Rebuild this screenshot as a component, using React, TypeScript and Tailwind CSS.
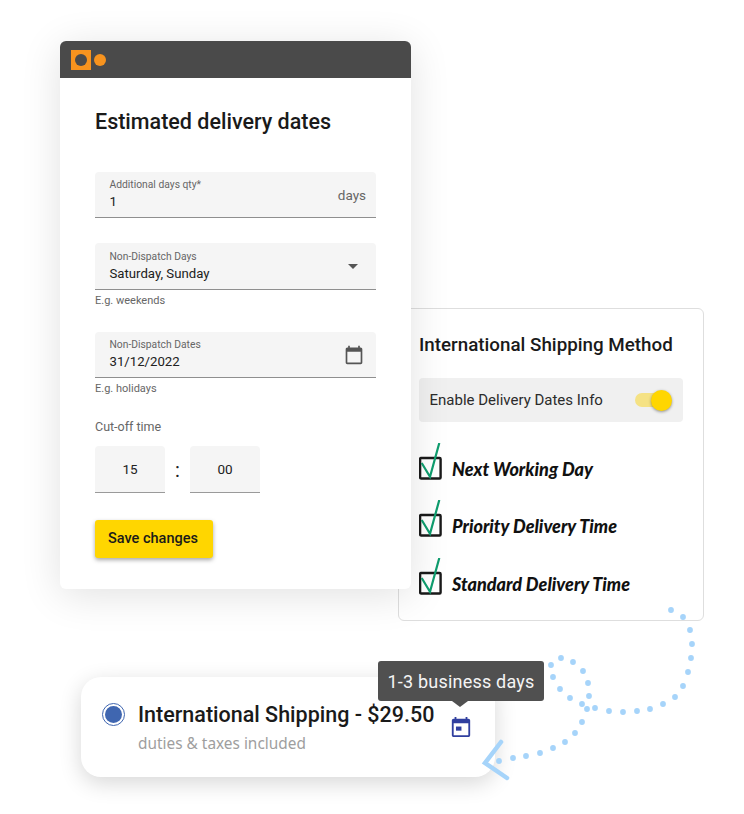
import React from 'react';

const dots = [
  [671, 610], [683, 617], [690, 630], [692, 644], [691, 658], [688, 672], [683, 686], [675, 697], [663, 704], [650, 709],
  [637, 711], [623, 712], [609, 711], [595, 708], [582, 704], [570, 698], [560, 689], [553, 677], [551, 665], [561, 658],
  [573, 662], [583, 671], [588, 683], [589, 696], [587, 709], [582, 722], [575, 733], [565, 742], [553, 748], [540, 753],
  [526, 756], [513, 758], [499, 761],
];

const items = ['Next Working Day', 'Priority Delivery Time', 'Standard Delivery Time'];

function CalendarIcon({ className }: { className: string }) {
  return (
    <svg viewBox="0 0 24 24" className={className} fill="currentColor">
      <path d="M20 3h-1V1h-2v2H7V1H5v2H4c-1.100 0-2 .9-2 2v16c0 1.100.9 2 2 2h16c1.100 0 2-.9 2-2V5c0-1.100-.9-2-2-2zm0 18H4V8h16v13z" />
    </svg>
  );
}

function Field({ label, value, tall, children }: { label: string; value: string; tall?: boolean; children?: React.ReactNode }) {
  return (
    <div className={`flex items-center justify-between rounded-t border-b border-[#8f8f8f] bg-[#f5f5f5] pl-[14.5px] pr-[10px] ${tall ? 'h-[47px]' : 'h-[46px]'}`}>
      <div className="flex flex-col pt-[1px]">
        <span className="text-[10.3px] leading-[14px] text-[#666666]">{label}</span>
        <span className="text-[13.2px] leading-[20px] text-[#212121]">{value}</span>
      </div>
      {children}
    </div>
  );
}

function TimeBox({ value }: { value: string }) {
  return (
    <div className="flex h-[47px] w-[70px] items-center justify-center rounded-t border-b border-[#9a9a9a] bg-[#f5f5f5] text-[13.5px] text-[#212121]">
      {value}
    </div>
  );
}

export default function App() {
  return (
    <div className="relative h-[814px] w-[744px] overflow-hidden bg-white font-['Roboto',sans-serif]">
      {/* shipping method card */}
      <div className="absolute left-[398px] top-[308px] h-[313px] w-[306px] rounded-[6px] border border-[#dedede] bg-white pl-[20px]">
        <h2 className="mt-[23px] text-[18.8px] font-medium leading-[26px] text-[#1a1a1a]">International Shipping Method</h2>
        <div className="mt-[20px] flex h-[44px] w-[264px] items-center justify-between rounded bg-[#f0f0f0] pl-[10.5px] pr-[14px]">
          <span className="text-[15px] text-[#2b2b2b]">Enable Delivery Dates Info</span>
          <div className="relative h-[14px] w-[34px] rounded-full bg-[#f5e284]">
            <div className="absolute right-[-3px] top-[-3.5px] h-[21px] w-[21px] rounded-full bg-[#ffd600] shadow-[0_1px_3px_rgba(0,0,0,0.4)]" />
          </div>
        </div>
        <div className="mt-[21px] flex flex-col gap-[20.4px]">
          {items.map((item) => (
            <div key={item} className="flex h-[37px] items-start gap-[9px]">
              <svg width="24" height="37" viewBox="0 0 24 37" fill="none" className="shrink-0">
                <rect x="1.100" y="15" width="20.500" height="20.500" stroke="#1a1a1a" strokeWidth="2.400" rx="1" />
                <path d="M2.700 20L11 33.700L20.300 0" stroke="#0f9d6e" strokeWidth="2.200" />
              </svg>
              <span className="mt-[14px] text-[18px] font-black italic leading-[24px] text-[#111111] font-['Lato',cursive]">{item}</span>
            </div>
          ))}
        </div>
      </div>

      {/* settings window */}
      <div className="absolute left-[60px] top-[41px] h-[548px] w-[351px] overflow-hidden rounded-[6px] bg-white shadow-[0_6px_40px_rgba(0,0,0,0.12)]">
        <div className="flex h-[37px] items-center gap-[3px] bg-[#4a4a4a] pl-[11px]">
          <div className="flex h-[20px] w-[20px] items-center justify-center bg-[#f7931e]">
            <div className="h-[12px] w-[12px] rounded-full bg-[#4a4a4a]" />
          </div>
          <div className="h-[12px] w-[12px] rounded-full bg-[#f7931e]" />
        </div>
        <div className="px-[35px]">
          <h1 className="mt-[29px] text-[21.5px] font-medium leading-[30px] text-[#1a1a1a]">Estimated delivery dates</h1>
          <div className="mt-[35px]">
            <Field label="Additional days qty*" value="1">
              <span className="mt-[2px] text-[13.5px] text-[#666666]">days</span>
            </Field>
          </div>
          <div className="mt-[25px]">
            <Field label="Non-Dispatch Days" value="Saturday, Sunday" tall>
              <div className="mr-[8px] h-0 w-0 border-x-[5px] border-t-[5px] border-x-transparent border-t-[#555555]" />
            </Field>
            <p className="mt-[3px] text-[11px] leading-[16px] text-[#666666]">E.g. weekends</p>
          </div>
          <div className="mt-[23px]">
            <Field label="Non-Dispatch Dates" value="31/12/2022">
              <CalendarIcon className="mr-[2px] h-[20px] w-[20px] text-[#555555]" />
            </Field>
            <p className="mt-[3px] text-[11px] leading-[16px] text-[#666666]">E.g. holidays</p>
          </div>
          <p className="mt-[21px] text-[12.5px] leading-[18px] text-[#666666]">Cut-off time</p>
          <div className="mt-[10px] flex items-center">
            <TimeBox value="15" />
            <span className="w-[25px] text-center text-[20px] leading-[24px] text-[#212121]">:</span>
            <TimeBox value="00" />
          </div>
          <button className="mt-[27px] h-[38px] w-[118px] rounded-[3px] bg-[#ffd600] pr-[2px] text-[14.5px] font-medium text-[#1a1a1a] shadow-[0_2px_4px_rgba(0,0,0,0.35)]">
            Save changes
          </button>
        </div>
      </div>

      {/* checkout option */}
      <div className="absolute left-[81px] top-[677px] flex h-[100px] w-[414px] items-start rounded-[20px] bg-white pl-[21px] pt-[26px] shadow-[0_6px_22px_rgba(0,0,0,0.16)]">
        <div className="mr-[13px] flex h-[23px] w-[23px] shrink-0 items-center justify-center rounded-full border border-[#3f66b0]">
          <div className="h-[17px] w-[17px] rounded-full bg-[#3f66b0]" />
        </div>
        <div className="pt-[1px]">
          <div className="text-[21.5px] font-medium leading-[22px] text-[#1a1a1a]">International Shipping - $29.50</div>
          <div className="mt-[7px] text-[15.4px] leading-[22px] text-[#9e9e9e] font-['Noto_Sans',sans-serif]">duties &amp; taxes included</div>
        </div>
      </div>
      <svg viewBox="0 0 24 24" className="absolute left-[450px] top-[715.5px] h-[22px] w-[22px] text-[#303f9f]" fill="currentColor">
        <path d="M20 3h-1V1h-2v2H7V1H5v2H4c-1.100 0-2 .9-2 2v16c0 1.100.9 2 2 2h16c1.100 0 2-.9 2-2V5c0-1.100-.9-2-2-2zm0 18H4V8h16v13z" />
        <path d="M6.500 11.500h6V16h-6z" />
      </svg>

      {/* tooltip */}
      <div className="absolute left-[378px] top-[661px] flex h-[40px] w-[166px] items-center justify-center rounded-[3px] bg-[#505050] text-[18px] tracking-[0.2px] text-[#f5f5f5]">
        1-3 business days
        <div className="absolute left-[74px] top-[40px] h-0 w-0 border-x-[8px] border-t-[6px] border-x-transparent border-t-[#505050]" />
      </div>

      {/* dotted arrow */}
      <svg className="pointer-events-none absolute left-0 top-0" width="744" height="814" fill="none">
        {dots.map(([cx, cy], i) => (
          <circle key={i} cx={cx} cy={cy} r="2.900" fill="#a6d4fa" />
        ))}
        <path d="M501 742L485 763L507 778" stroke="#a6d4fa" strokeWidth="4.500" strokeLinecap="round" />
      </svg>
    </div>
  );
}
